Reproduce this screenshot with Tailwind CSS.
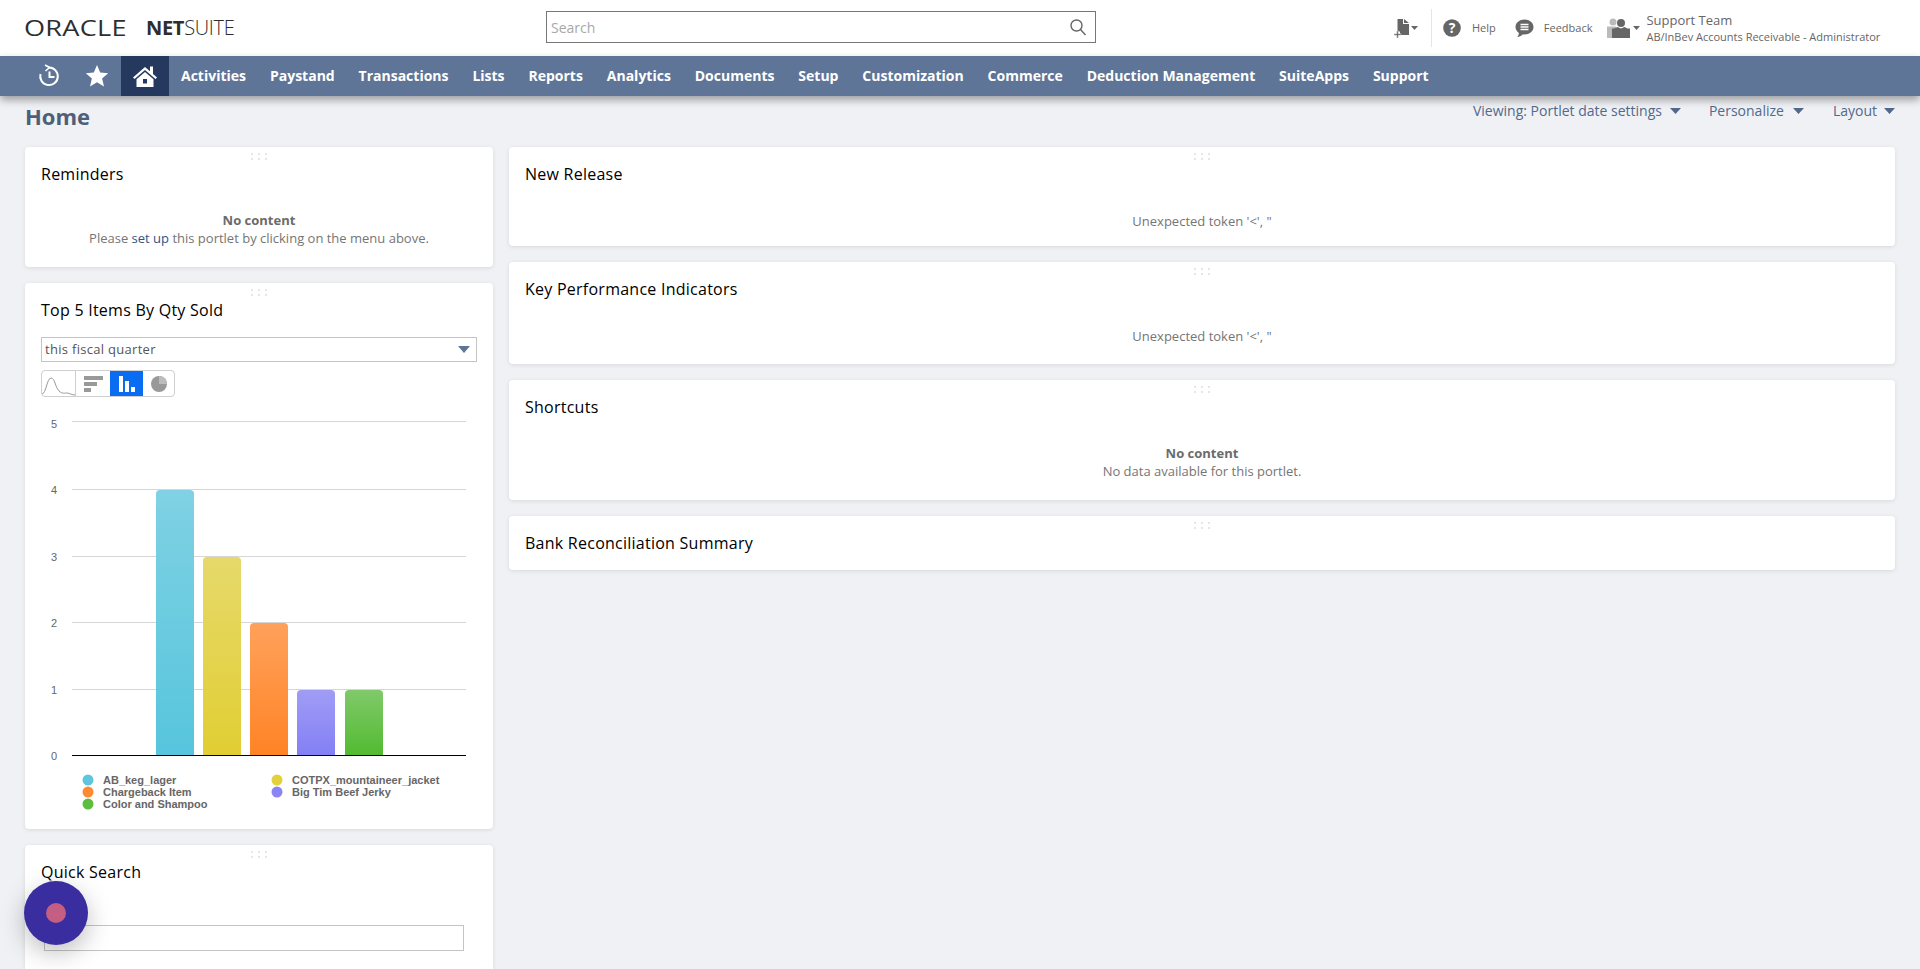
<!DOCTYPE html>
<html lang="en">
<head>
    <meta charset="UTF-8">
    <title>Home - NetSuite</title>
    <script src="https://cdn.jsdelivr.net/npm/@tailwindcss/browser@4"></script>
</head>
<body class="h-screen overflow-hidden bg-[#eff1f5] font-['Open_Sans',sans-serif]">
    <svg class="hidden">
        <symbol id="grip" viewBox="0 0 16 8">
            <g fill="#e6e6e6">
                <rect x="0" y="0" width="2" height="2"/><rect x="7" y="0" width="2" height="2"/><rect x="14" y="0" width="2" height="2"/>
                <rect x="0" y="5" width="2" height="2"/><rect x="7" y="5" width="2" height="2"/><rect x="14" y="5" width="2" height="2"/>
            </g>
        </symbol>
    </svg>

    <!-- Header -->
    <header class="h-14 bg-white flex items-start pl-6 relative">
        <div class="mt-[18px] w-[522px] flex items-center text-[#2e2e2e] leading-[20px]">
            <span class="w-[122px] inline-block origin-left scale-x-[1.29] text-[21px] font-medium tracking-[0.2px]">ORACLE</span>
            <span class="text-[20px] font-bold tracking-[-0.3px]">NET</span><span class="text-[20px] font-light tracking-[-0.3px]">SUITE</span>
        </div>
        <div class="mt-[11px] w-[550px] h-8 border border-[#777] flex items-center justify-between pl-1 pr-2">
            <span class="text-[14px] text-[#a8a8a8]">Search</span>
            <svg width="18" height="18" viewBox="0 0 18 18" fill="none" stroke="#666" stroke-width="1.4"><circle cx="7.5" cy="7.5" r="5.5"/><path d="M11.5 11.5l5 5.5"/></svg>
        </div>
        <div class="ml-[298px] flex items-center h-full text-[#666]">
            <svg class="w-[15px] h-[19px]" viewBox="0 0 15 19" fill="#666"><path d="M3.5 0H9v5h6v11H6v-3.500H3.500z"/><path d="M10 0l5 4h-5z"/><path d="M2.700 12h1.600v2.700H7v1.600H4.300V19H2.700v-2.700H0v-1.600h2.700z" stroke="#fff" stroke-width="0.400"/></svg>
            <svg class="ml-[2px]" width="7" height="4" viewBox="0 0 7 4" fill="#666"><path d="M0 0h7L3.5 4z"/></svg>
            <div class="ml-[13px] w-px h-[38px] bg-[#e6e6e6]"></div>
            <svg class="ml-[11px]" width="18" height="18" viewBox="0 0 18 18"><circle cx="9" cy="9" r="8.8" fill="#666"/><text x="9" y="14" font-size="14" font-weight="700" fill="#fff" text-anchor="middle" font-family="Open Sans">?</text></svg>
            <span class="ml-[11px] text-[11px]">Help</span>
            <svg class="ml-[19px]" width="19" height="19" viewBox="0 0 19 19"><path d="M9.5 0.5C4.5 0.5 0.5 3.8 0.5 8c0 2.4 1.3 4.5 3.4 5.9-.1 1.6-.8 3-1.7 4.1 2-.3 4-1.3 5.4-2.6.6.1 1.2.1 1.9.1 5 0 9-3.3 9-7.5S14.500.5 9.500.5z" fill="#666"/><path d="M5.500 5.500h8M5.500 8h8M5.500 10.500h8" stroke="#fff" stroke-width="1.400"/></svg>
            <span class="ml-[10px] text-[11px]">Feedback</span>
            <svg class="ml-[15px]" width="23" height="20" viewBox="0 0 23 20"><circle cx="6" cy="4" r="3.500" fill="#bbb"/><rect x="0" y="8.500" width="9" height="11.500" fill="#bbb"/><circle cx="14" cy="5" r="4" fill="#666"/><path d="M5 10.500h2l3.500-1.500 3.500 1.500 3.500-1.500 3 1.500h3V20H5z" fill="#666"/></svg>
            <svg class="ml-[3px]" width="7" height="4" viewBox="0 0 7 4" fill="#666"><path d="M0 0h7L3.5 4z"/></svg>
            <div class="ml-[6px] flex flex-col">
                <span class="text-[13px] leading-[17px]">Support Team</span>
                <span class="text-[11px] leading-[15px] whitespace-nowrap">AB/InBev Accounts Receivable - Administrator</span>
            </div>
        </div>
    </header>

    <!-- Nav -->
    <nav class="h-10 bg-[#5f7597] flex items-center pl-[37px] text-white text-[14px] font-bold shadow-[0_4px_8px_rgba(0,0,0,0.35)] relative z-10">
        <svg width="24" height="24" viewBox="0 0 24 24" fill="none" stroke="#fff" stroke-width="2"><path d="M12 3.500a8.800 8.800 0 1 1-8.500 6.500"/><path d="M8 1l4.500 2.500L8.500 7" stroke-width="1.600"/><path d="M12.500 7.500v5.500h5"/></svg>
        <svg class="ml-[24px]" width="24" height="24" viewBox="0 0 24 24" fill="#fff"><path d="M12 1l3.200 7.500 8 .7-6.100 5.300 1.900 8-7-4.300-7 4.300 1.900-8L.8 9.200l8-.7z"/></svg>
        <div class="ml-[12px] w-12 h-full bg-[#25395f] flex items-center justify-center">
            <svg width="26" height="24" viewBox="0 0 26 24" fill="#fff"><path d="M13 3L1 13.500l1.500 1.600L13 6l10.500 9.100 1.500-1.600-4-3.500V2.500h-3v4.800z"/><path fill-rule="evenodd" d="M13 8l-8.500 7.300V23h17v-7.700zM11 15h4v4.500h-4z"/></svg>
        </div>
        <div class="ml-3 mb-[2px] flex gap-[23.9px] whitespace-nowrap">
            <span>Activities</span><span>Paystand</span><span>Transactions</span><span>Lists</span><span>Reports</span><span>Analytics</span><span>Documents</span><span>Setup</span><span>Customization</span><span>Commerce</span><span>Deduction Management</span><span>SuiteApps</span><span>Support</span>
        </div>
    </nav>

    <main class="px-[25px]">
        <div class="h-[51px] flex items-start justify-between">
            <h1 class="mt-1 text-[22px] leading-[32px] font-bold text-[#4d5f79]">Home</h1>
            <div class="mt-[5px] flex items-center text-[14px] leading-[20px] text-[#52698c]">
                <span>Viewing: Portlet date settings</span>
                <svg class="ml-[8px]" width="11" height="6" viewBox="0 0 11 6" fill="#52698c"><path d="M0 0h11L5.500 6z"/></svg>
                <span class="ml-[28px]">Personalize</span>
                <svg class="ml-[9px]" width="11" height="6" viewBox="0 0 11 6" fill="#52698c"><path d="M0 0h11L5.500 6z"/></svg>
                <span class="ml-[29px]">Layout</span>
                <svg class="ml-[7px]" width="11" height="6" viewBox="0 0 11 6" fill="#52698c"><path d="M0 0h11L5.500 6z"/></svg>
            </div>
        </div>

        <div class="flex gap-4 items-start">
            <!-- Left column -->
            <div class="w-[468px] flex flex-col gap-4">
                <section class="h-[120px] bg-white rounded shadow-[0_1px_4px_rgba(0,0,0,0.1)] relative pt-4 px-4">
                    <svg class="absolute top-[6px] left-1/2 -ml-2 w-4 h-2"><use href="#grip"/></svg>
                    <h2 class="text-[16px] leading-[22px] font-medium tracking-[0.25px] text-black">Reminders</h2>
                    <div class="mt-[26px] text-center text-[13px] leading-[18px] text-[#757575]">
                        <div class="font-bold text-[#6b6b6b]">No content</div>
                        <div>Please <span class="text-[#2f5485]">set up</span> this portlet by clicking on the menu above.</div>
                    </div>
                </section>

                <section class="h-[546px] bg-white rounded shadow-[0_1px_4px_rgba(0,0,0,0.1)] relative pt-4 px-4">
                    <svg class="absolute top-[6px] left-1/2 -ml-2 w-4 h-2"><use href="#grip"/></svg>
                    <h2 class="text-[16px] leading-[22px] font-medium tracking-[0.25px] text-black">Top 5 Items By Qty Sold</h2>
                    <div class="mt-4 h-[25px] border border-[#c4c4c4] flex items-center justify-between pl-[3px] pr-[6px] text-[13px] font-medium tracking-[0.3px] text-[#555]">
                        <span>this fiscal quarter</span>
                        <svg width="12" height="7" viewBox="0 0 12 7" fill="#5f7597"><path d="M0 0h12L6 7z"/></svg>
                    </div>
                    <div class="mt-2 w-[134px] h-[27px] border border-[#cfcfcf] rounded flex overflow-hidden">
                        <div class="w-[34px] border-r border-[#cfcfcf]">
                            <svg width="33" height="25" viewBox="0 0 33 25" fill="none" stroke="#999"><path d="M0 23c4 0 5-16 9-16 4 0 4 9 8 13 3 3 6 2 8 2s5 2 8 2"/></svg>
                        </div>
                        <div class="w-[34px] flex items-center justify-center">
                            <svg width="19" height="16" viewBox="0 0 19 16" fill="#999"><rect width="19" height="4"/><rect y="6" width="13" height="4"/><rect y="12" width="7" height="4"/></svg>
                        </div>
                        <div class="w-[33px] bg-[#0a6cf0] flex items-center justify-center">
                            <svg width="16" height="16" viewBox="0 0 16 16" fill="#fff"><rect width="4" height="16"/><rect x="6" y="5" width="4" height="11"/><rect x="12" y="11" width="4" height="5"/></svg>
                        </div>
                        <div class="flex-1 flex items-center justify-center">
                            <svg width="16" height="16" viewBox="0 0 16 16"><circle cx="8" cy="8" r="8" fill="#999"/><path d="M8 8V0a8 8 0 0 1 8 8z" fill="#bcbcbc"/></svg>
                        </div>
                    </div>
                    <svg class="mt-2 block" width="435" height="420" viewBox="41 405 435 420">
                        <defs>
                            <linearGradient id="c1" x1="0" y1="0" x2="0" y2="1"><stop offset="0" stop-color="#7bd0e2"/><stop offset="1" stop-color="#50c3dc"/></linearGradient>
                            <linearGradient id="c2" x1="0" y1="0" x2="0" y2="1"><stop offset="0" stop-color="#e5d865"/><stop offset="1" stop-color="#e0cd2b"/></linearGradient>
                            <linearGradient id="c3" x1="0" y1="0" x2="0" y2="1"><stop offset="0" stop-color="#ff9e55"/><stop offset="1" stop-color="#ff7f1d"/></linearGradient>
                            <linearGradient id="c4" x1="0" y1="0" x2="0" y2="1"><stop offset="0" stop-color="#9d99f5"/><stop offset="1" stop-color="#7f7bf5"/></linearGradient>
                            <linearGradient id="c5" x1="0" y1="0" x2="0" y2="1"><stop offset="0" stop-color="#7cc765"/><stop offset="1" stop-color="#4cb92a"/></linearGradient>
                        </defs>
                        <g stroke="#d6d6d6" stroke-width="1.200">
                            <path d="M72 421.500H466M72 489.500H466M72 556.500H466M72 622.500H466M72 689.500H466"/>
                        </g>
                        <g opacity="0.96">
                            <path d="M156 755V494a4 4 0 0 1 4-4h30a4 4 0 0 1 4 4V755z" fill="url(#c1)"/>
                            <path d="M203 755V561a4 4 0 0 1 4-4h30a4 4 0 0 1 4 4V755z" fill="url(#c2)"/>
                            <path d="M250 755V627a4 4 0 0 1 4-4h30a4 4 0 0 1 4 4V755z" fill="url(#c3)"/>
                            <path d="M297 755V694a4 4 0 0 1 4-4h30a4 4 0 0 1 4 4V755z" fill="url(#c4)"/>
                            <path d="M345 755V694a4 4 0 0 1 4-4h30a4 4 0 0 1 4 4V755z" fill="url(#c5)"/>
                        </g>
                        <path d="M72 755.500H466" stroke="#000" stroke-width="1"/>
                        <g font-family="Liberation Sans" font-size="11" fill="#666" text-anchor="middle">
                            <text x="54" y="428">5</text><text x="54" y="494">4</text><text x="54" y="561">3</text><text x="54" y="627">2</text><text x="54" y="694">1</text><text x="54" y="760">0</text>
                        </g>
                        <circle cx="88" cy="780" r="5.500" fill="#5ec6df"/><circle cx="277" cy="780" r="5.500" fill="#e2d13c"/>
                        <circle cx="88" cy="792" r="5.500" fill="#ff8a33"/><circle cx="277" cy="792" r="5.500" fill="#8985f5"/>
                        <circle cx="88" cy="804" r="5.500" fill="#5cbd3f"/>
                        <g font-family="Liberation Sans" font-size="11" font-weight="700" fill="#666">
                            <text x="103" y="784">AB_keg_lager</text><text x="292" y="784">COTPX_mountaineer_jacket</text>
                            <text x="103" y="796">Chargeback Item</text><text x="292" y="796">Big Tim Beef Jerky</text>
                            <text x="103" y="808">Color and Shampoo</text>
                        </g>
                    </svg>
                </section>

                <section class="h-[124px] bg-white rounded-t shadow-[0_1px_4px_rgba(0,0,0,0.1)] relative pt-4 px-4">
                    <svg class="absolute top-[6px] left-1/2 -ml-2 w-4 h-2"><use href="#grip"/></svg>
                    <h2 class="text-[16px] leading-[22px] font-medium tracking-[0.25px] text-black">Quick Search</h2>
                    <div class="mt-[42px] ml-[3px] w-[420px] h-[26px] border border-[#c4c4c4]"></div>
                </section>
            </div>

            <!-- Right column -->
            <div class="flex-1 flex flex-col gap-4">
                <section class="h-[99px] bg-white rounded shadow-[0_1px_4px_rgba(0,0,0,0.1)] relative pt-4 px-4">
                    <svg class="absolute top-[6px] left-1/2 -ml-2 w-4 h-2"><use href="#grip"/></svg>
                    <h2 class="text-[16px] leading-[22px] font-medium tracking-[0.25px] text-black">New Release</h2>
                    <div class="mt-[27px] text-center text-[13px] leading-[18px] text-[#757575]">Unexpected token '&lt;', "</div>
                </section>
                <section class="h-[102px] bg-white rounded shadow-[0_1px_4px_rgba(0,0,0,0.1)] relative pt-4 px-4">
                    <svg class="absolute top-[6px] left-1/2 -ml-2 w-4 h-2"><use href="#grip"/></svg>
                    <h2 class="text-[16px] leading-[22px] font-medium tracking-[0.25px] text-black">Key Performance Indicators</h2>
                    <div class="mt-[27px] text-center text-[13px] leading-[18px] text-[#757575]">Unexpected token '&lt;', "</div>
                </section>
                <section class="h-[120px] bg-white rounded shadow-[0_1px_4px_rgba(0,0,0,0.1)] relative pt-4 px-4">
                    <svg class="absolute top-[6px] left-1/2 -ml-2 w-4 h-2"><use href="#grip"/></svg>
                    <h2 class="text-[16px] leading-[22px] font-medium tracking-[0.25px] text-black">Shortcuts</h2>
                    <div class="mt-[26px] text-center text-[13px] leading-[18px] text-[#757575]">
                        <div class="font-bold text-[#6b6b6b]">No content</div>
                        <div>No data available for this portlet.</div>
                    </div>
                </section>
                <section class="h-[54px] bg-white rounded shadow-[0_1px_4px_rgba(0,0,0,0.1)] relative pt-4 px-4">
                    <svg class="absolute top-[6px] left-1/2 -ml-2 w-4 h-2"><use href="#grip"/></svg>
                    <h2 class="text-[16px] leading-[22px] font-medium tracking-[0.25px] text-black">Bank Reconciliation Summary</h2>
                </section>
            </div>
        </div>
    </main>

    <!-- Floating button -->
    <div class="fixed left-6 top-[881px] w-16 h-16 rounded-full bg-[#392da0] flex items-center justify-center shadow-[0_8px_24px_rgba(0,0,0,0.25)] z-20">
        <div class="w-5 h-5 rounded-full bg-[#c45f83]"></div>
    </div>
</body>
</html>
